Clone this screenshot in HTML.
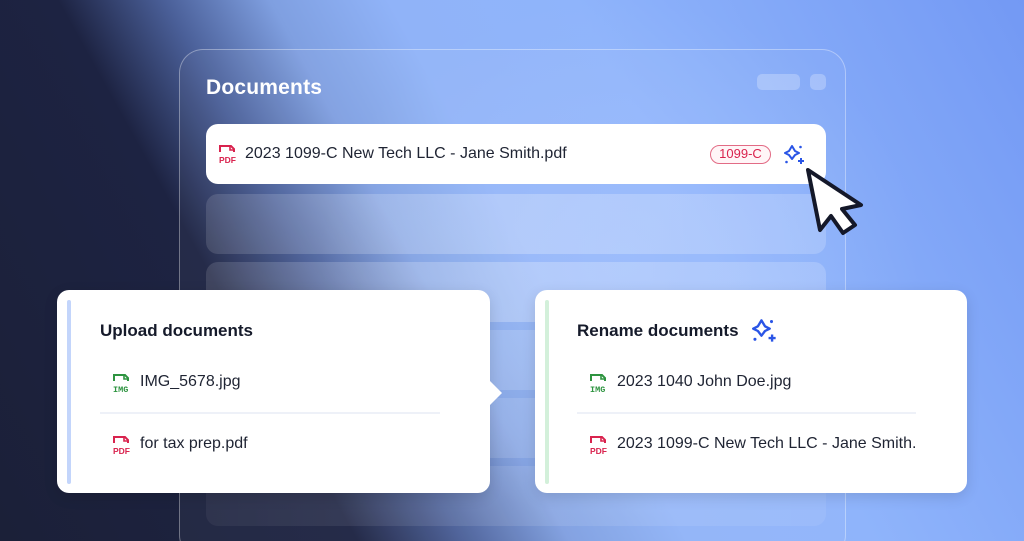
<!DOCTYPE html>
<html><head><meta charset="utf-8"><style>
*{margin:0;padding:0;box-sizing:border-box}
html,body{width:1024px;height:541px;overflow:hidden}
body{position:relative;font-family:"Liberation Sans",sans-serif;
background:linear-gradient(61deg,#1b2038 0%,#1d2342 27%,#4a5f98 35%,#7f9fe0 43%,#90b3f8 52%,#8fb4fb 66%,#7399f4 100%);}
.glow{position:absolute;left:0;top:0;width:1024px;height:541px;background:radial-gradient(ellipse 300px 260px at 620px 260px,rgba(170,200,255,.35),transparent)}
.panel{position:absolute;left:179px;top:49px;width:667px;height:510px;border:1.5px solid rgba(255,255,255,.35);border-radius:24px;background:rgba(255,255,255,.04)}
.title{position:absolute;left:206px;top:76px;color:#fff;font-size:21px;font-weight:bold;letter-spacing:.2px}
.btn{position:absolute;top:74px;height:16px;border-radius:5px;background:rgba(255,255,255,.25)}
.row{position:absolute;left:206px;width:620px;height:60px;border-radius:12px}
.ghost{background:linear-gradient(90deg,rgba(255,255,255,.12),rgba(255,255,255,.25) 50%,rgba(255,255,255,.18))}
.white{background:#fff;top:124px}
.txt{position:absolute;font-size:16px;color:#1f2433;white-space:nowrap}
.tag{position:absolute;left:710px;top:145px;height:19px;width:61px;border:1.5px solid #e26b85;border-radius:10px;color:#d9234e;font-size:13px;text-align:center;line-height:16px;background:#fff5f7}
.card{position:absolute;top:290px;height:203px;background:#fff;border-radius:12px;box-shadow:0 4px 14px rgba(0,0,0,.12)}
.bar{position:absolute;left:10px;top:10px;width:4px;height:184px;border-radius:2px}
.ct{position:absolute;top:31px;font-size:17px;font-weight:bold;color:#151a2a}
.div{position:absolute;height:2px;background:#eef1f8;top:122px}
.ic{position:absolute}
</style></head><body>
<div class="glow"></div>
<div class="panel"></div>
<div class="title">Documents</div>
<div class="btn" style="left:757px;width:43px"></div>
<div class="btn" style="left:810px;width:16px"></div>
<div class="row ghost" style="top:194px"></div>
<div class="row ghost" style="top:262px"></div>
<div class="row ghost" style="top:330px;opacity:.6"></div>
<div class="row ghost" style="top:398px;opacity:.5"></div>
<div class="row ghost" style="top:466px;opacity:.4"></div>
<div class="row white"></div>
<svg class="ic" style="left:218px;top:144px" width="20" height="20" viewBox="0 0 20 20"><path d="M2 8V2h11l3 3v3" fill="none" stroke="#d9234e" stroke-width="2"/><path d="M12 2v4h4" fill="none" stroke="#d9234e" stroke-width="1.6"/><text x="1" y="19" font-size="8.5" font-weight="bold" fill="#d9234e" font-family="Liberation Sans">PDF</text></svg>
<div class="txt" style="left:245px;top:145px">2023 1099-C New Tech LLC - Jane Smith.pdf</div>
<div class="tag">1099-C</div>
<svg class="ic" style="left:784px;top:144px" width="22" height="22" viewBox="0 0 22 22"><path d="M8 2 L11 7 L15 9 L11 11 L8 15 L5 11 L1 9 L5 7Z" fill="none" stroke="#2a55e6" stroke-width="2" stroke-linejoin="round"/><circle cx="16.5" cy="3" r="1.3" fill="#2a55e6"/><circle cx="2.5" cy="18" r="1.3" fill="#2a55e6"/><path d="M14 17h6M17 14v6" stroke="#2a55e6" stroke-width="2"/></svg>
<svg class="ic" style="left:800px;top:162px" width="70" height="78" viewBox="800 162 70 78"><path d="M808 170 L861 205 L842 209 L855 225 L843 233 L831 216 L820 230 Z" fill="#fff" stroke="#141829" stroke-width="4" stroke-linejoin="round"/></svg>

<div class="card" style="left:57px;width:433px">
<div class="bar" style="background:#c3d5fb"></div>
<div class="ct" style="left:43px">Upload documents</div>
<svg class="ic" style="left:55px;top:83px" width="20" height="20" viewBox="0 0 20 20"><path d="M2 8V2h11l3 3v3" fill="none" stroke="#2e9440" stroke-width="2"/><path d="M12 2v4h4" fill="none" stroke="#2e9440" stroke-width="1.6"/><text x="1" y="19" font-size="8.5" font-weight="bold" fill="#2e9440" font-family="Liberation Mono">IMG</text></svg>
<div class="txt" style="left:83px;top:83px">IMG_5678.jpg</div>
<div class="div" style="left:43px;width:340px"></div>
<svg class="ic" style="left:55px;top:145px" width="20" height="20" viewBox="0 0 20 20"><path d="M2 8V2h11l3 3v3" fill="none" stroke="#d9234e" stroke-width="2"/><path d="M12 2v4h4" fill="none" stroke="#d9234e" stroke-width="1.6"/><text x="1" y="19" font-size="8.5" font-weight="bold" fill="#d9234e" font-family="Liberation Sans">PDF</text></svg>
<div class="txt" style="left:83px;top:145px">for tax prep.pdf</div>
</div>
<div style="position:absolute;left:489px;top:380px;width:0;height:0;border-top:13px solid transparent;border-bottom:13px solid transparent;border-left:13px solid #fff"></div>

<div class="card" style="left:535px;width:432px">
<div class="bar" style="background:#d3f0da"></div>
<div class="ct" style="left:42px">Rename documents</div>
<svg class="ic" style="left:217px;top:28px" width="26" height="26" viewBox="0 0 22 22"><path d="M8 2 L11 7 L15 9 L11 11 L8 15 L5 11 L1 9 L5 7Z" fill="none" stroke="#2a55e6" stroke-width="2" stroke-linejoin="round"/><circle cx="16.5" cy="3" r="1.3" fill="#2a55e6"/><circle cx="2.5" cy="18" r="1.3" fill="#2a55e6"/><path d="M14 17h6M17 14v6" stroke="#2a55e6" stroke-width="2"/></svg>
<svg class="ic" style="left:54px;top:83px" width="20" height="20" viewBox="0 0 20 20"><path d="M2 8V2h11l3 3v3" fill="none" stroke="#2e9440" stroke-width="2"/><path d="M12 2v4h4" fill="none" stroke="#2e9440" stroke-width="1.6"/><text x="1" y="19" font-size="8.5" font-weight="bold" fill="#2e9440" font-family="Liberation Mono">IMG</text></svg>
<div class="txt" style="left:82px;top:83px">2023 1040 John Doe.jpg</div>
<div class="div" style="left:42px;width:339px"></div>
<svg class="ic" style="left:54px;top:145px" width="20" height="20" viewBox="0 0 20 20"><path d="M2 8V2h11l3 3v3" fill="none" stroke="#d9234e" stroke-width="2"/><path d="M12 2v4h4" fill="none" stroke="#d9234e" stroke-width="1.6"/><text x="1" y="19" font-size="8.5" font-weight="bold" fill="#d9234e" font-family="Liberation Sans">PDF</text></svg>
<div class="txt" style="left:82px;top:145px;width:300px;overflow:hidden">2023 1099-C New Tech LLC - Jane Smith.pdf</div>
</div>
</body></html>
